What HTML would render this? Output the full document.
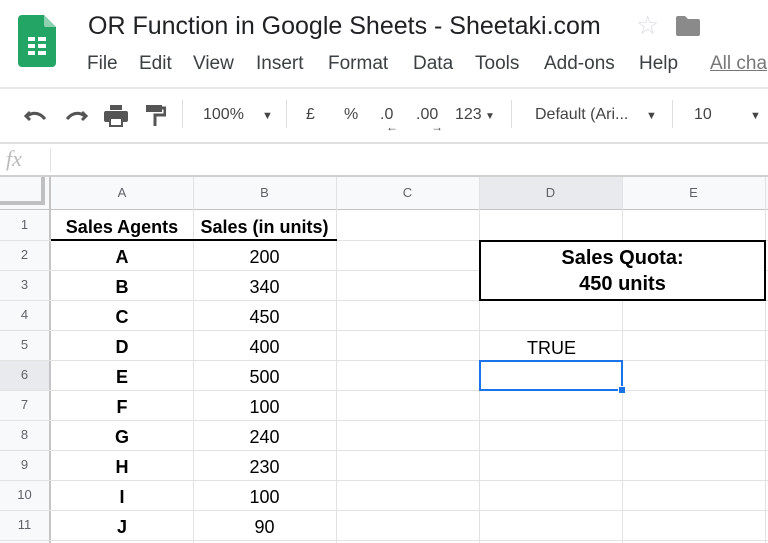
<!DOCTYPE html>
<html><head><meta charset="utf-8"><style>
*{margin:0;padding:0;box-sizing:border-box}
body{width:768px;height:543px;overflow:hidden;background:#fff;font-family:"Liberation Sans",Arial,sans-serif;position:relative}
.a{position:absolute}
.title{left:88px;top:12px;font-size:25px;color:#202124;white-space:nowrap}
.menu{top:53px;font-size:19px;color:#3c4043;white-space:nowrap}
.tb{top:106px;font-size:16px;color:#444;white-space:nowrap}
.vl{position:absolute;background:#e2e2e2;width:1px}
.hl{position:absolute;background:#e2e2e2;height:1px}
.ch{position:absolute;top:176px;height:34px;line-height:34px;text-align:center;font-size:13px;color:#5f6368}
.rh{position:absolute;left:0;width:49px;height:30px;line-height:30px;text-align:center;font-size:13px;color:#5f6368}
.c{position:absolute;height:30px;line-height:30px;text-align:center;font-size:18px;color:#000}
.b{font-weight:bold}
</style></head><body>
<svg class="a" style="left:18px;top:15px" width="38" height="52" viewBox="0 0 38 52">
<path d="M4 0H26L38 12V48a4 4 0 0 1-4 4H4a4 4 0 0 1-4-4V4a4 4 0 0 1 4-4z" fill="#23a566"/>
<path d="M26 0L38 12H28a2 2 0 0 1-2-2z" fill="#8ed1b1"/>
<g fill="#fff"><rect x="10" y="22" width="7" height="4"/><rect x="20" y="22" width="8" height="4"/><rect x="10" y="29" width="7" height="4"/><rect x="20" y="29" width="8" height="4"/><rect x="10" y="36" width="7" height="4"/><rect x="20" y="36" width="8" height="4"/></g>
</svg>
<div class="a title">OR Function in Google Sheets - Sheetaki.com</div>
<div class="a" style="left:636px;top:10px;font-size:26px;color:#dadce0">☆</div>
<svg class="a" style="left:676px;top:16px" width="24" height="20" viewBox="0 0 24 20"><path d="M0 2a2 2 0 0 1 2-2h7l3 3h10a2 2 0 0 1 2 2v13a2 2 0 0 1-2 2H2a2 2 0 0 1-2-2z" fill="#8a8a8a"/></svg>
<div class="a menu" style="left:87px">File</div>
<div class="a menu" style="left:139px">Edit</div>
<div class="a menu" style="left:193px">View</div>
<div class="a menu" style="left:256px">Insert</div>
<div class="a menu" style="left:328px">Format</div>
<div class="a menu" style="left:413px">Data</div>
<div class="a menu" style="left:475px">Tools</div>
<div class="a menu" style="left:544px">Add-ons</div>
<div class="a menu" style="left:639px">Help</div>
<div class="a menu" style="left:710px;color:#777;text-decoration:underline">All cha</div>
<div class="hl" style="left:0;top:87px;width:768px;height:2px;background:#e8e8e8"></div>
<svg class="a" style="left:24px;top:108px" width="24" height="16" viewBox="0 0 24 16"><path d="M6 4L2 8l4 4" fill="none" stroke="#555" stroke-width="3"/><path d="M3 8c6-4 12-4 18 3" fill="none" stroke="#555" stroke-width="3"/></svg>
<svg class="a" style="left:64px;top:108px" width="24" height="16" viewBox="0 0 24 16"><path d="M18 4l4 4-4 4" fill="none" stroke="#555" stroke-width="3"/><path d="M21 8c-6-4-12-4-18 3" fill="none" stroke="#555" stroke-width="3"/></svg>
<svg class="a" style="left:104px;top:105px" width="24" height="22" viewBox="0 0 24 22"><rect x="6" y="0" width="12" height="5" fill="#555"/><rect x="0" y="6" width="24" height="11" rx="2" fill="#555"/><rect x="6" y="13" width="12" height="8" fill="#fff" stroke="#555" stroke-width="2"/></svg>
<svg class="a" style="left:146px;top:105px" width="20" height="22" viewBox="0 0 20 22"><rect x="0" y="0" width="16" height="7" fill="#555"/><path d="M16 3h3v7H9v11" fill="none" stroke="#555" stroke-width="3"/></svg>
<div class="vl" style="left:182px;top:100px;height:28px;background:#ddd"></div>
<div class="a tb" style="left:203px">100%</div>
<div class="a tb" style="left:262px;font-size:11px;top:110px">▼</div>
<div class="vl" style="left:286px;top:100px;height:28px;background:#ddd"></div>
<div class="a tb" style="left:306px">£</div>
<div class="a tb" style="left:344px">%</div>
<div class="a tb" style="left:380px">.0</div>
<div class="a" style="left:386px;top:120px;font-size:12px;color:#444">←</div>
<div class="a tb" style="left:416px">.00</div>
<div class="a" style="left:431px;top:120px;font-size:12px;color:#444">→</div>
<div class="a tb" style="left:455px">123</div>
<div class="a tb" style="left:485px;font-size:10px;top:111px">▼</div>
<div class="vl" style="left:511px;top:100px;height:28px;background:#ddd"></div>
<div class="a tb" style="left:535px">Default (Ari...</div>
<div class="a tb" style="left:646px;font-size:11px;top:110px">▼</div>
<div class="vl" style="left:672px;top:100px;height:28px;background:#ddd"></div>
<div class="a tb" style="left:694px">10</div>
<div class="a tb" style="left:750px;font-size:11px;top:110px">▼</div>
<div class="hl" style="left:0;top:142px;width:768px;height:2px;background:#e0e0e0"></div>
<div class="a" style="left:6px;top:146px;font-size:22px;font-style:italic;color:#bbb;font-family:'Liberation Serif',serif">fx</div>
<div class="vl" style="left:50px;top:148px;height:24px"></div>
<div class="hl" style="left:0;top:175px;width:768px;height:2px;background:#d0d0d0"></div>
<div class="a" style="left:0;top:177px;width:768px;height:33px;background:#f8f9fa"></div>
<div class="a" style="left:0;top:177px;width:45px;height:28px;background:#f8f9fa;border-right:4px solid #c0c0c0;border-bottom:4px solid #c0c0c0"></div>
<div class="a" style="left:479px;top:177px;width:143px;height:33px;background:#e8eaed"></div>
<div class="a" style="left:0;top:210px;width:49px;height:333px;background:#f8f9fa"></div>
<div class="a" style="left:0;top:360px;width:49px;height:30px;background:#e8eaed"></div>
<div class="vl" style="left:49px;top:176px;height:367px;width:2px;background:#c4c4c4"></div>
<div class="hl" style="left:0;top:209px;width:768px;background:#c4c4c4"></div>
<div class="ch" style="left:51px;width:142px">A</div>
<div class="ch" style="left:193px;width:143px">B</div>
<div class="ch" style="left:336px;width:143px">C</div>
<div class="ch" style="left:479px;width:143px">D</div>
<div class="ch" style="left:622px;width:143px">E</div>
<div class="vl" style="left:193px;top:177px;height:366px"></div>
<div class="vl" style="left:336px;top:177px;height:366px"></div>
<div class="vl" style="left:479px;top:177px;height:366px"></div>
<div class="vl" style="left:622px;top:177px;height:366px"></div>
<div class="vl" style="left:765px;top:177px;height:366px"></div>
<div class="hl" style="left:0;top:240px;width:768px"></div>
<div class="hl" style="left:0;top:270px;width:768px"></div>
<div class="hl" style="left:0;top:300px;width:768px"></div>
<div class="hl" style="left:0;top:330px;width:768px"></div>
<div class="hl" style="left:0;top:360px;width:768px"></div>
<div class="hl" style="left:0;top:390px;width:768px"></div>
<div class="hl" style="left:0;top:420px;width:768px"></div>
<div class="hl" style="left:0;top:450px;width:768px"></div>
<div class="hl" style="left:0;top:480px;width:768px"></div>
<div class="hl" style="left:0;top:510px;width:768px"></div>
<div class="hl" style="left:0;top:540px;width:768px"></div>
<div class="rh" style="top:210px">1</div><div class="rh" style="top:240px">2</div><div class="rh" style="top:270px">3</div><div class="rh" style="top:300px">4</div><div class="rh" style="top:330px">5</div><div class="rh" style="top:360px">6</div><div class="rh" style="top:390px">7</div><div class="rh" style="top:420px">8</div><div class="rh" style="top:450px">9</div><div class="rh" style="top:480px">10</div><div class="rh" style="top:510px">11</div>
<div class="a" style="left:51px;top:239px;width:286px;height:2px;background:#000"></div>
<div class="c b" style="left:51px;top:212px;width:142px">Sales Agents</div>
<div class="c b" style="left:193px;top:212px;width:143px">Sales (in units)</div>
<div class="c b" style="left:51px;top:242px;width:142px">A</div><div class="c" style="left:193px;top:242px;width:143px">200</div>
<div class="c b" style="left:51px;top:272px;width:142px">B</div><div class="c" style="left:193px;top:272px;width:143px">340</div>
<div class="c b" style="left:51px;top:302px;width:142px">C</div><div class="c" style="left:193px;top:302px;width:143px">450</div>
<div class="c b" style="left:51px;top:332px;width:142px">D</div><div class="c" style="left:193px;top:332px;width:143px">400</div>
<div class="c b" style="left:51px;top:362px;width:142px">E</div><div class="c" style="left:193px;top:362px;width:143px">500</div>
<div class="c b" style="left:51px;top:392px;width:142px">F</div><div class="c" style="left:193px;top:392px;width:143px">100</div>
<div class="c b" style="left:51px;top:422px;width:142px">G</div><div class="c" style="left:193px;top:422px;width:143px">240</div>
<div class="c b" style="left:51px;top:452px;width:142px">H</div><div class="c" style="left:193px;top:452px;width:143px">230</div>
<div class="c b" style="left:51px;top:482px;width:142px">I</div><div class="c" style="left:193px;top:482px;width:143px">100</div>
<div class="c b" style="left:51px;top:512px;width:142px">J</div><div class="c" style="left:193px;top:512px;width:143px">90</div>
<div class="a b" style="left:479px;top:240px;width:287px;height:61px;background:#fff;border:2px solid #000;text-align:center;font-size:20px;line-height:26px;padding-top:3px">Sales Quota:<br>450 units</div>
<div class="c" style="left:480px;top:333px;width:143px;font-size:18px;text-align:left;padding-left:47px">TRUE</div>
<div class="a" style="left:479px;top:360px;width:144px;height:31px;border:2px solid #1a73e8"></div>
<div class="a" style="left:618px;top:386px;width:8px;height:8px;background:#1a73e8;border:1px solid #fff"></div>
</body></html>
